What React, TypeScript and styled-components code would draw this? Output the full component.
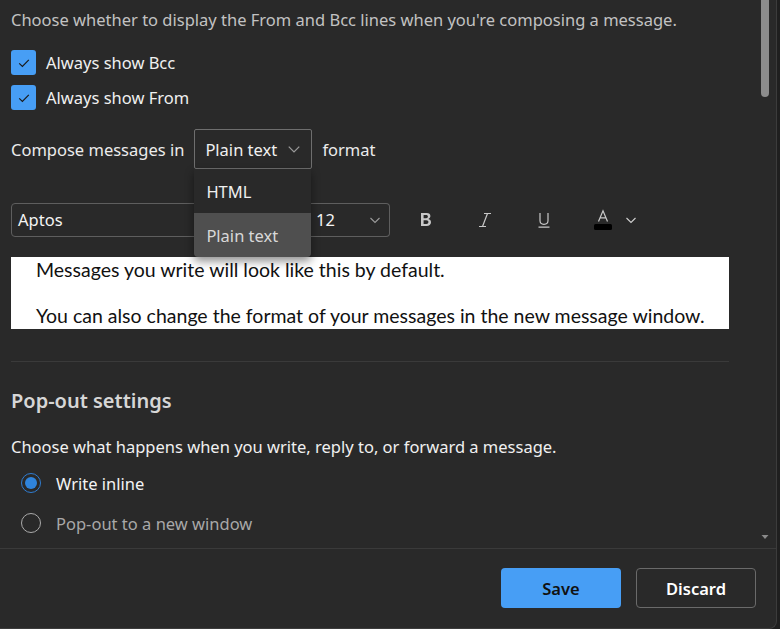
import { createGlobalStyle } from "styled-components";
import styled from "styled-components";

const GlobalStyle = createGlobalStyle`
  html, body {
    margin: 0;
    padding: 0;
    background: #1f1f1f;
  }
  body {
    font-family: "Noto Sans", "Open Sans", "Liberation Sans", sans-serif;
    color: #ffffff;
  }
`;

function CheckIcon() {
  return (
    <svg width="14" height="14" viewBox="0 0 14 14">
      <path d="M2.2 7.4 L5.4 10.5 L11.8 3.8" fill="none" stroke="#1a1a1a" strokeWidth="1.2" />
    </svg>
  );
}

function Chevron({ color = "#9a9a9a", size = 12 }: { color?: string; size?: number }) {
  return (
    <svg width={size} height={size} viewBox="0 0 12 12">
      <path d="M1.5 4 L6 8.5 L10.5 4" fill="none" stroke={color} strokeWidth="1.1" />
    </svg>
  );
}

function App() {
  return (
    <>
      <GlobalStyle />
      <Panel>
        <Body>
          <Content>
            <Description>
              Choose whether to display the From and Bcc lines when you're composing a message.
            </Description>
            <CheckList>
              <CheckRow>
                <CheckBox>
                  <CheckIcon />
                </CheckBox>
                <CheckLabel>Always show Bcc</CheckLabel>
              </CheckRow>
              <CheckRow>
                <CheckBox>
                  <CheckIcon />
                </CheckBox>
                <CheckLabel>Always show From</CheckLabel>
              </CheckRow>
            </CheckList>

            <ComposeRow>
              <span>Compose messages in</span>
              <SelectWrap>
                <FormatSelect>
                  <span>Plain text</span>
                  <Chevron size={14} />
                </FormatSelect>
                <Menu>
                  <MenuItem>HTML</MenuItem>
                  <MenuItem active>Plain text</MenuItem>
                </Menu>
              </SelectWrap>
              <span>format</span>
            </ComposeRow>

            <FontRow>
              <FontSelect width={299}>
                <span>Aptos</span>
                <Chevron />
              </FontSelect>
              <FontSelect width={80}>
                <span>12</span>
                <Chevron />
              </FontSelect>
              <ToolGroup>
                <ToolButton>
                  <svg width="16" height="18" viewBox="0 0 16 18">
                    <path
                      d="M3 2 H8.6 C11.2 2 12.4 3.3 12.4 5.1 C12.4 6.6 11.5 7.6 10.3 8 C11.9 8.3 13 9.5 13 11.3 C13 13.7 11.2 15 8.6 15 H3 Z M5.6 4.1 V7.2 H8.1 C9.3 7.2 9.9 6.6 9.9 5.6 C9.9 4.7 9.3 4.1 8.1 4.1 Z M5.6 9.2 V12.9 H8.4 C9.7 12.9 10.4 12.2 10.4 11 C10.4 9.9 9.7 9.2 8.4 9.2 Z"
                      fill="#c8c8c8"
                      fillRule="evenodd"
                    />
                  </svg>
                </ToolButton>
                <ToolButton>
                  <svg width="16" height="18" viewBox="0 0 16 18">
                    <path d="M7 2.5 H14 M2 15.5 H9 M10.5 2.5 L5.5 15.5" fill="none" stroke="#c8c8c8" strokeWidth="1.2" />
                  </svg>
                </ToolButton>
                <ToolButton>
                  <svg width="16" height="18" viewBox="0 0 16 18">
                    <path d="M4 2 V9.5 C4 12 5.6 13.3 8 13.3 C10.4 13.3 12 12 12 9.5 V2 M2.5 16.2 H13.5" fill="none" stroke="#c8c8c8" strokeWidth="1.2" />
                  </svg>
                </ToolButton>
                <ColorButton>
                  <svg width="20" height="22" viewBox="0 0 20 22">
                    <path d="M5.5 12.5 L10 1.8 L14.5 12.5 M7.1 8.8 H12.9" fill="none" stroke="#c8c8c8" strokeWidth="1.2" />
                    <rect x="1" y="15" width="18" height="6" rx="1.5" fill="#000000" />
                  </svg>
                  <Chevron color="#d0d0d0" size={12} />
                </ColorButton>
              </ToolGroup>
            </FontRow>

            <Preview>
              <p>Messages you write will look like this by default.</p>
              <p>You can also change the format of your messages in the new message window.</p>
            </Preview>

            <Divider />

            <Heading>Pop-out settings</Heading>
            <SubText>Choose what happens when you write, reply to, or forward a message.</SubText>
            <RadioList>
              <RadioRow>
                <Radio checked />
                <RadioLabel checked>Write inline</RadioLabel>
              </RadioRow>
              <RadioRow>
                <Radio />
                <RadioLabel>Pop-out to a new window</RadioLabel>
              </RadioRow>
            </RadioList>
          </Content>
          <ScrollTrack>
            <Thumb />
            <ScrollArrow>
              <svg width="8" height="6" viewBox="0 0 8 6">
                <path d="M0.5 1 H7.5 L4 5 Z" fill="#8a8a8a" />
              </svg>
            </ScrollArrow>
          </ScrollTrack>
        </Body>
        <Footer>
          <PrimaryButton>Save</PrimaryButton>
          <SecondaryButton>Discard</SecondaryButton>
        </Footer>
      </Panel>
    </>
  );
}

export default App;

const Panel = styled.div`
  width: 777px;
  height: 629px;
  box-sizing: border-box;
  background: #292929;
  border-right: 1px solid #3c3c3c;
  border-bottom: 1px solid #3c3c3c;
  border-bottom-right-radius: 8px;
  display: flex;
  flex-direction: column;
  overflow: hidden;
`;

const Body = styled.div`
  flex: 1;
  min-height: 0;
  display: flex;
`;

const Content = styled.div`
  width: 718px;
  padding: 9px 0 0 11px;
  overflow: hidden;
`;

const Description = styled.div`
  font-size: 16.5px;
  line-height: 22px;
  color: #c2c2c2;
  white-space: nowrap;
`;

const CheckList = styled.div`
  display: flex;
  flex-direction: column;
  gap: 10px;
  margin-top: 19px;
`;

const CheckRow = styled.div`
  display: flex;
  align-items: center;
  gap: 10px;
  height: 25px;
`;

const CheckBox = styled.div`
  width: 25px;
  height: 25px;
  border-radius: 3px;
  background: #479ef5;
  display: flex;
  align-items: center;
  justify-content: center;
`;

const CheckLabel = styled.span`
  font-size: 16.5px;
  color: #f0f0f0;
`;

const ComposeRow = styled.div`
  display: flex;
  align-items: center;
  gap: 10px;
  margin-top: 19px;
  font-size: 16.5px;
  color: #ececec;
`;

const SelectWrap = styled.div`
  position: relative;
`;

const FormatSelect = styled.div`
  width: 118px;
  height: 40px;
  box-sizing: border-box;
  border: 1px solid #6e6e6e;
  border-radius: 2px;
  display: flex;
  align-items: center;
  justify-content: space-between;
  padding: 0 10px 0 10px;
  color: #f0f0f0;
`;

const Menu = styled.div`
  position: absolute;
  top: 40px;
  left: 0;
  width: 117px;
  background: #292929;
  border-radius: 0 0 4px 4px;
  box-shadow: 0 4px 10px rgba(0, 0, 0, 0.45);
  overflow: hidden;
  z-index: 5;
`;

const MenuItem = styled.div<{ active?: boolean }>`
  height: 44px;
  display: flex;
  align-items: center;
  padding-left: 12px;
  font-size: 16.5px;
  color: ${(p) => (p.active ? "#d8d8d8" : "#f0f0f0")};
  background: ${(p) => (p.active ? "#4f4f4f" : "transparent")};
`;

const FontRow = styled.div`
  display: flex;
  align-items: center;
  margin-top: 33px;
  height: 35px;
`;

const FontSelect = styled.div<{ width: number }>`
  width: ${(p) => p.width}px;
  height: 34px;
  box-sizing: border-box;
  border: 1px solid #5e5e5e;
  border-radius: 4px;
  display: flex;
  align-items: center;
  justify-content: space-between;
  padding: 0 8px 0 6px;
  font-size: 16.5px;
  color: #f4f4f4;
  & + & {
    border-left: none;
    border-radius: 0 4px 4px 0;
  }
`;

const ToolGroup = styled.div`
  display: flex;
  align-items: center;
  margin-left: 6px;
`;

const ToolButton = styled.div`
  width: 59px;
  display: flex;
  justify-content: center;
  align-items: center;
`;

const ColorButton = styled.div`
  display: flex;
  align-items: center;
  gap: 12px;
  margin-left: 20px;
`;

const Preview = styled.div`
  margin-top: 20px;
  width: 718px;
  height: 72px;
  box-sizing: border-box;
  background: #ffffff;
  padding: 2px 0 0 25px;
  font-family: "Lato", "Liberation Sans", sans-serif;
  font-size: 19.5px;
  color: #111111;
  white-space: nowrap;
  p {
    margin: 0;
    line-height: 22px;
  }
  p + p {
    margin-top: 24px;
  }
`;

const Divider = styled.div`
  margin-top: 32px;
  height: 1px;
  background: #3a3a3a;
`;

const Heading = styled.div`
  margin-top: 26px;
  font-size: 20px;
  font-weight: 600;
  line-height: 26px;
  color: #d6d6d6;
`;

const SubText = styled.div`
  margin-top: 22px;
  font-size: 16.5px;
  line-height: 22px;
  color: #f0f0f0;
`;

const RadioList = styled.div`
  display: flex;
  flex-direction: column;
  gap: 20px;
  margin-top: 15px;
  padding-left: 10px;
`;

const RadioRow = styled.div`
  display: flex;
  align-items: center;
  gap: 15px;
  height: 20px;
`;

const Radio = styled.div<{ checked?: boolean }>`
  width: 20px;
  height: 20px;
  box-sizing: border-box;
  border-radius: 50%;
  border: 1px solid ${(p) => (p.checked ? "#2f7cd0" : "#aaaaaa")};
  display: flex;
  align-items: center;
  justify-content: center;
  &::after {
    content: "";
    width: 12px;
    height: 12px;
    border-radius: 50%;
    background: ${(p) => (p.checked ? "#2f84dc" : "transparent")};
  }
`;

const RadioLabel = styled.span<{ checked?: boolean }>`
  font-size: 16.5px;
  color: ${(p) => (p.checked ? "#f4f4f4" : "#a8a8a8")};
`;

const ScrollTrack = styled.div`
  flex: 1;
  display: flex;
  flex-direction: column;
  align-items: flex-end;
  padding-right: 7px;
`;

const Thumb = styled.div`
  width: 8px;
  height: 97px;
  background: #8c8c8c;
  border-radius: 0 0 4px 4px;
`;

const ScrollArrow = styled.div`
  margin-top: auto;
  margin-bottom: 8px;
  display: flex;
`;

const Footer = styled.div`
  height: 80px;
  box-sizing: border-box;
  flex-shrink: 0;
  border-top: 1px solid #3a3a3a;
  display: flex;
  align-items: flex-start;
  justify-content: flex-end;
  gap: 15px;
  padding: 19px 20px 0 0;
`;

const PrimaryButton = styled.button`
  width: 120px;
  height: 40px;
  border: none;
  border-radius: 4px;
  background: #479ef5;
  color: #111111;
  font-family: inherit;
  font-size: 16.5px;
  font-weight: 600;
`;

const SecondaryButton = styled.button`
  width: 120px;
  height: 40px;
  border: 1px solid #6a6a6a;
  border-radius: 4px;
  background: #292929;
  color: #ffffff;
  font-family: inherit;
  font-size: 16.5px;
  font-weight: 600;
`;
